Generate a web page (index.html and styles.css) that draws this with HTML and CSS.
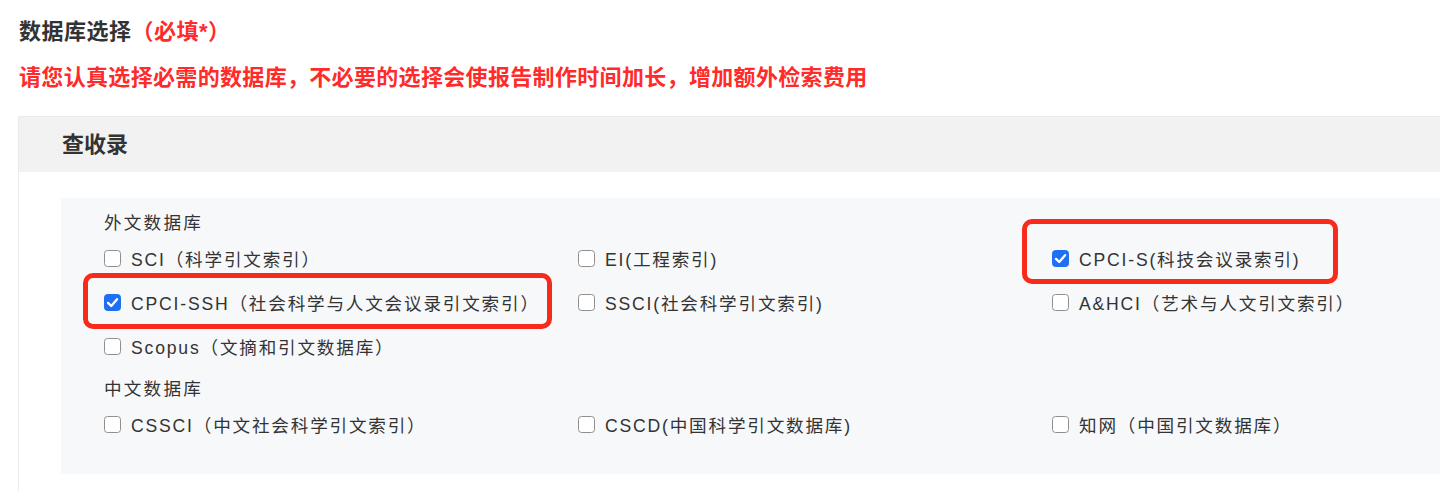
FILE: index.html
```html
<!DOCTYPE html>
<html lang="zh-CN">
<head>
<meta charset="utf-8">
<title>数据库选择</title>
<link rel="stylesheet" href="styles.css">
</head>
<body>
<div class="page">
  <h2 class="title">数据库选择<span class="req">（必填*）</span></h2>
  <p class="note">请您认真选择必需的数据库，不必要的选择会使报告制作时间加长，增加额外检索费用</p>
  <section class="card">
    <div class="card-head">查收录</div>
    <div class="card-body">
      <div class="panel">
        <div class="group-label">外文数据库</div>
        <div class="grid">
          <label class="item"><span class="box"></span><span class="txt">SCI（科学引文索引）</span></label>
          <label class="item"><span class="box"></span><span class="txt">EI(工程索引)</span></label>
          <label class="item"><span class="box checked"><svg viewBox="0 0 16 16" width="17" height="17"><path d="M3.8 8.4 L6.8 11.3 L12.3 4.9" fill="none" stroke="#fff" stroke-width="2.2" stroke-linecap="round" stroke-linejoin="round"/></svg></span><span class="txt">CPCI-S(科技会议录索引)</span></label>
          <label class="item"><span class="box checked"><svg viewBox="0 0 16 16" width="17" height="17"><path d="M3.8 8.4 L6.8 11.3 L12.3 4.9" fill="none" stroke="#fff" stroke-width="2.2" stroke-linecap="round" stroke-linejoin="round"/></svg></span><span class="txt">CPCI-SSH（社会科学与人文会议录引文索引）</span></label>
          <label class="item"><span class="box"></span><span class="txt">SSCI(社会科学引文索引)</span></label>
          <label class="item"><span class="box"></span><span class="txt">A&amp;HCI（艺术与人文引文索引）</span></label>
          <label class="item"><span class="box"></span><span class="txt">Scopus（文摘和引文数据库）</span></label>
        </div>
        <div class="group-label second">中文数据库</div>
        <div class="grid">
          <label class="item"><span class="box"></span><span class="txt">CSSCI（中文社会科学引文索引）</span></label>
          <label class="item"><span class="box"></span><span class="txt">CSCD(中国科学引文数据库)</span></label>
          <label class="item"><span class="box"></span><span class="txt">知网（中国引文数据库）</span></label>
        </div>
        <div class="mark mark-a"></div>
        <div class="mark mark-b"></div>
      </div>
    </div>
  </section>
</div>
</body>
</html>
```
FILE: styles.css
```css
html, body {
  margin: 0;
  padding: 0;
  background: #fff;
  overflow: hidden;
}
body {
  font-family: "Liberation Sans", "Noto Sans CJK SC", sans-serif;
  color: #333;
}
.page {
  padding: 17px 0 0 18px;
}
.title {
  margin: 0 0 0 1px;
  font-size: 22px;
  line-height: 30px;
  font-weight: 700;
  letter-spacing: 0.5px;
  color: #333;
}
.req {
  color: #ff2b2b;
}
.note {
  margin: 16px 0 0 1px;
  font-size: 22px;
  line-height: 30px;
  font-weight: 700;
  letter-spacing: 0.33px;
  color: #ff2b2b;
}
.card {
  margin-top: 23px;
  border: 1px solid #ebebeb;
  border-right: none;
  width: 1600px;
}
.card-head {
  height: 55px;
  line-height: 55px;
  background: #f2f2f2;
  padding-left: 43px;
  font-size: 22px;
  font-weight: 700;
  color: #333;
}
.card-body {
  padding: 26px 0 40px 42px;
}
.panel {
  position: relative;
  background: #f7f8fa;
  padding: 13px 0 38px 43px;
}
.group-label {
  font-size: 17.6px;
  line-height: 24px;
  letter-spacing: 2.2px;
  margin-bottom: 11px;
  color: #333;
}
.group-label.second {
  margin-top: 19px;
}
.grid {
  display: grid;
  grid-template-columns: repeat(3, 474px);
  row-gap: 20px;
}
.item {
  display: flex;
  align-items: center;
  gap: 10px;
  height: 24px;
  font-size: 17.6px;
  letter-spacing: 1.8px;
  color: #333;
  white-space: nowrap;
}
.box {
  box-sizing: border-box;
  width: 17px;
  height: 17px;
  border: 1px solid #8f8f8f;
  border-radius: 3.5px;
  background: #fff;
  flex: none;
  display: flex;
}
.box.checked {
  border-color: #1f6ff2;
  background: #1f6ff2;
}
.box svg {
  margin: -1px;
}
.mark {
  position: absolute;
  box-sizing: border-box;
  border: 5px solid #f72a1b;
  border-radius: 10px;
}
.mark-a {
  left: 22px;
  top: 75px;
  width: 469px;
  height: 56px;
}
.mark-b {
  left: 961px;
  top: 21px;
  width: 316px;
  height: 65px;
}
```
